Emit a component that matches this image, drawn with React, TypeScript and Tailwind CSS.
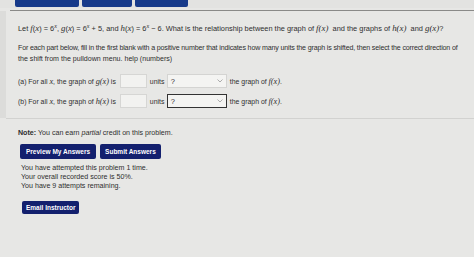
import React from "react";

function M({ children }: { children: React.ReactNode }) {
  return (
    <span className="italic text-[1.2em]" style={{ fontFamily: '"Liberation Serif", serif' }}>
      {children}
    </span>
  );
}

function Fx({ f }: { f: string }) {
  return (
    <M>
      {f}(x)
    </M>
  );
}

function Sup() {
  return (
    <sup className="italic text-[6px]" style={{ fontFamily: '"Liberation Serif", serif' }}>
      x
    </sup>
  );
}

function Select({ dark }: { dark?: boolean }) {
  return (
    <div
      className={`flex items-center justify-between w-[60px] h-[14px] px-[3px] bg-[#f4f4f2] ${
        dark ? "border border-[#333]" : "border border-[#d4d4d2]"
      }`}
    >
      <span className="text-[7.5px] text-[#333]">?</span>
      <svg width="6" height="4" viewBox="0 0 6 4" className="text-[#999]">
        <path d="M0.5 0.5 L3 3 L5.5 0.5" fill="none" stroke="currentColor" strokeWidth="0.8" />
      </svg>
    </div>
  );
}

function Part({ label, fn, dark }: { label: string; fn: string; dark?: boolean }) {
  return (
    <div className="flex items-center h-[14px] whitespace-nowrap text-[6.9px]">
      <span>
        ({label}) For all <M>x</M>, the graph of <Fx f={fn} /> is
      </span>
      <div className="ml-[4px] w-[27px] h-[14px] border border-[#d6d6d4] bg-[#f2f2f0]" />
      <span className="ml-[3px] w-[17px]">units</span>
      <Select dark={dark} />
      <span className="ml-[3px]">
        the graph of <Fx f="f" />.
      </span>
    </div>
  );
}

export default function App() {
  return (
    <div
      className="w-[474px] h-[257px] overflow-hidden bg-[#e7e7e5] text-[#2e2e2e] text-[7.1px] leading-[11px]"
      style={{ fontFamily: '"Liberation Sans", Arial, sans-serif' }}
    >
      {/* top tabs */}
      <div className="flex gap-[3px] pl-[15px] h-[8px] bg-[#e3e3e1]">
        <div className="w-[64px] h-[7px] bg-[#173a8a] rounded-b-[2px]" />
        <div className="w-[50px] h-[7px] bg-[#173a8a] rounded-b-[2px]" />
        <div className="w-[53px] h-[7px] bg-[#173a8a] rounded-b-[2px]" />
      </div>
      <div className="mt-[2px] ml-[10px] h-[1px] bg-[#8a8a88]" />

      <div className="flex">
        <div className="w-[6px] bg-[#dcdcda]" />
        <div className="flex-1 pl-[12px] pr-[1px]">
          <p className="mt-[12px] whitespace-nowrap text-[7.4px]">
            Let <M>f</M>(<M>x</M>) = 6<Sup />, <M>g</M>(<M>x</M>) = 6<Sup /> + 5, and <M>h</M>(
            <M>x</M>) = 6<Sup /> − 6. What is the relationship between the graph of <Fx f="f" />{" "}
            &nbsp;and the graphs of <Fx f="h" /> &nbsp;and <Fx f="g" />?
          </p>
          <p className="mt-[9px] whitespace-nowrap">
            <span className="tracking-[-0.16px]">
              For each part below, fill in the first blank with a positive number that indicates
              how many units the graph is shifted, then select the correct direction of
            </span>
            <br />
            the shift from the pulldown menu. help (numbers)
          </p>
          <div className="mt-[9px] flex flex-col gap-[6px] pb-[10px]">
            <Part label="a" fn="g" />
            <Part label="b" fn="h" dark />
          </div>
        </div>
      </div>
      <div className="ml-[6px] h-[1px] bg-[#d2d2d0]" />

      <div className="pl-[18px]">
        <p className="mt-[9px]">
          <span className="font-bold">Note:</span> You can earn <i>partial</i> credit on this problem.
        </p>
        <div className="flex gap-[4px] mt-[5px] ml-[2px]">
          <div className="h-[15px] px-[6px] flex items-center bg-[#13206e] text-white font-bold text-[6.5px] rounded-[2px]">
            Preview My Answers
          </div>
          <div className="h-[15px] px-[5px] flex items-center bg-[#13206e] text-white font-bold text-[6.5px] rounded-[2px]">
            Submit Answers
          </div>
        </div>
        <div className="mt-[5px] ml-[3px] leading-[9px]">
          <p>You have attempted this problem 1 time.</p>
          <p>Your overall recorded score is 50%.</p>
          <p>You have 9 attempts remaining.</p>
        </div>
        <div className="mt-[10px] ml-[4px] inline-flex h-[13px] px-[4px] items-center bg-[#13206e] text-white font-bold text-[6.5px] rounded-[2px]">
          Email Instructor
        </div>
      </div>
    </div>
  );
}
